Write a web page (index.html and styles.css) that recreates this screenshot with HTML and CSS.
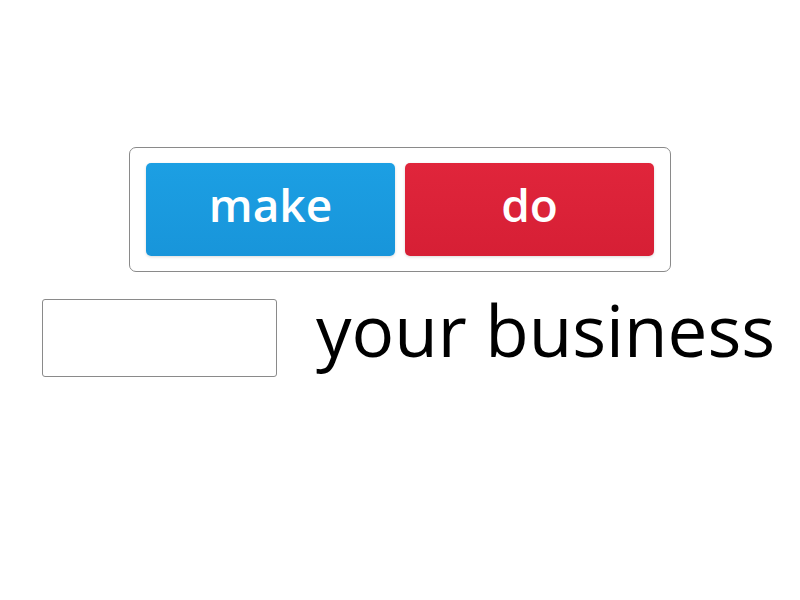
FILE: index.html
```html
<!DOCTYPE html>
<html lang="en">
<head>
  <meta charset="UTF-8" />
  <title>make or do</title>
  <link rel="stylesheet" href="styles.css">
</head>
<body>
  <div class="page">
    <div class="tray">
      <button class="tile blue">make</button>
      <button class="tile red">do</button>
    </div>
    <div class="sentence">
      <div class="blank"></div>
      <span class="words">your business</span>
    </div>
  </div>
</body>
</html>
```

FILE: styles.css
```css
body {
  margin: 0;
  font-family: 'Open Sans', sans-serif;
  background-color: #fff;
}

.page {
  width: 800px;
  height: 600px;
  padding-top: 147px;
  box-sizing: border-box;
}

.tray {
  display: flex;
  gap: 10px;
  width: 542px;
  margin-left: 129px;
  padding: 15px 16px;
  box-sizing: border-box;
  border: 1px solid #8a8a8a;
  border-radius: 7px;
}

.tile {
  flex: 1;
  height: 93px;
  border: none;
  border-radius: 5px;
  color: #fff;
  font-family: 'Open Sans', sans-serif;
  font-size: 46px;
  font-weight: 600;
  padding: 0 0 12px;
  box-shadow: 0 1px 3px rgba(0, 0, 0, 0.15);
}

.blue {
  background: linear-gradient(#1c9fe3, #1895da);
}

.red {
  background: linear-gradient(#e0253b, #d61f35);
}

.sentence {
  display: flex;
  align-items: center;
  margin-top: 27px;
  margin-left: 42px;
  gap: 39px;
}

.blank {
  width: 235px;
  height: 78px;
  box-sizing: border-box;
  border: 1px solid #8a8a8a;
  border-radius: 3px;
}

.words {
  font-size: 71px;
  color: #000;
  line-height: 1;
  margin-top: -18px;
}
```
